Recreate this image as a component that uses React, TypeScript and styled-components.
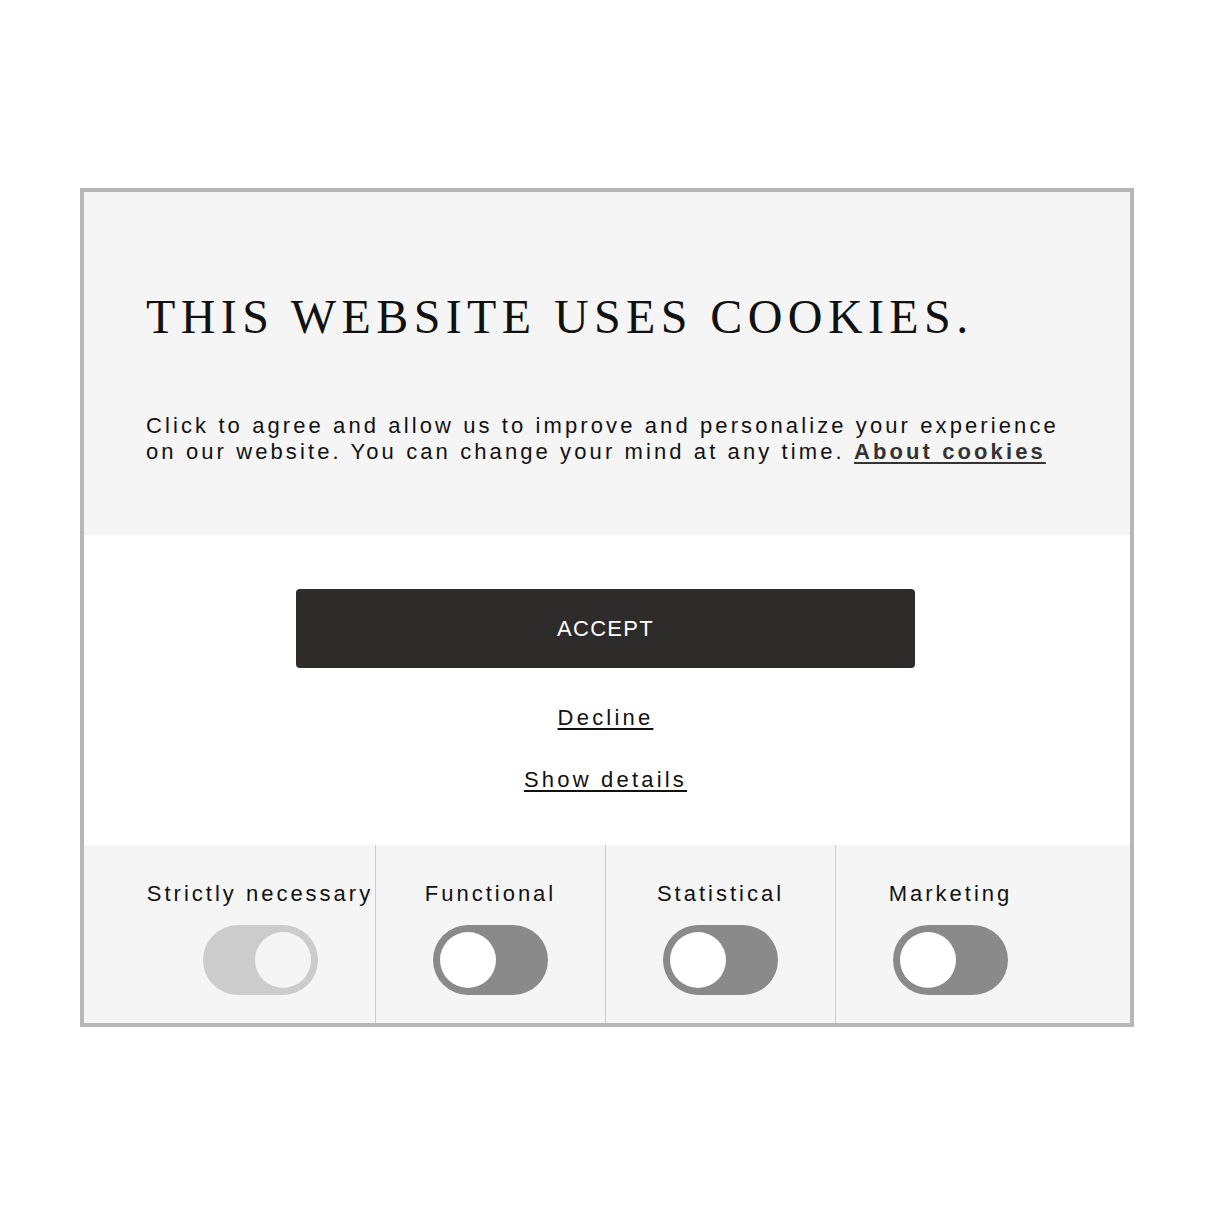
import React from 'react';
import styled, { createGlobalStyle } from 'styled-components';

const GlobalStyle = createGlobalStyle`
  html, body {
    margin: 0;
    padding: 0;
    background: #ffffff;
  }
  body {
    font-family: 'Liberation Sans', Arial, sans-serif;
  }
`;

const categories = [
  { label: 'Strictly necessary', locked: true },
  { label: 'Functional', locked: false },
  { label: 'Statistical', locked: false },
  { label: 'Marketing', locked: false },
];

const App = () => {
  return (
    <>
      <GlobalStyle />
      <Page>
        <Banner>
          <Intro>
            <Title>This website uses cookies.</Title>
            <Text>
              Click to agree and allow us to improve and personalize your experience
              <br />
              on our website. You can change your mind at any time.{' '}
              <AboutLink href='#'>About cookies</AboutLink>
            </Text>
          </Intro>
          <Actions>
            <AcceptButton>ACCEPT</AcceptButton>
            <TextLink href='#'>Decline</TextLink>
            <TextLink href='#'>Show details</TextLink>
          </Actions>
          <Categories>
            {categories.map((c) => (
              <Category key={c.label}>
                <CategoryLabel>{c.label}</CategoryLabel>
                <Toggle $locked={c.locked}>
                  <Knob $locked={c.locked} />
                </Toggle>
              </Category>
            ))}
          </Categories>
        </Banner>
      </Page>
    </>
  );
};

const Page = styled.div`
  width: 1216px;
  height: 1216px;
  padding-top: 188px;
  padding-left: 80px;
  box-sizing: border-box;
`;

const Banner = styled.div`
  width: 1054px;
  box-sizing: border-box;
  border: 4px solid #b7b7b7;
  background: #ffffff;
`;

const Intro = styled.div`
  background: #f5f5f5;
  padding: 101px 62px 70px;
`;

const Title = styled.h1`
  margin: 0 0 72px;
  font-family: 'Liberation Serif', 'Times New Roman', serif;
  font-weight: normal;
  font-size: 48px;
  line-height: 48px;
  letter-spacing: 5.4px;
  text-transform: uppercase;
  color: #111111;
`;

const Text = styled.p`
  margin: 0;
  font-size: 22px;
  line-height: 26px;
  letter-spacing: 3.1px;
  color: #111111;
  white-space: nowrap;
`;

const AboutLink = styled.a`
  font-weight: bold;
  color: #333333;
  text-decoration: underline;
  text-underline-offset: 3px;
`;

const Actions = styled.div`
  display: flex;
  flex-direction: column;
  align-items: center;
  gap: 36px;
  padding: 54px 3px 52px 0;
`;

const AcceptButton = styled.button`
  width: 619px;
  height: 79px;
  margin-bottom: 1px;
  border: none;
  border-radius: 4px;
  background: #2d2c2b;
  color: #ffffff;
  font-family: 'Liberation Sans', Arial, sans-serif;
  font-size: 22px;
  letter-spacing: 1.3px;
  cursor: pointer;
`;

const TextLink = styled.a`
  font-size: 22px;
  line-height: 26px;
  letter-spacing: 3.2px;
  color: #111111;
  text-decoration: underline;
  text-underline-offset: 3px;
`;

const Categories = styled.div`
  display: grid;
  grid-template-columns: repeat(4, 230px);
  padding: 0 61px;
  background: #f5f5f5;
`;

const Category = styled.div`
  display: flex;
  flex-direction: column;
  align-items: center;
  gap: 18px;
  padding: 36px 0 28px;

  & + & {
    border-left: 1px solid #cccccc;
  }
`;

const CategoryLabel = styled.span`
  font-size: 22px;
  line-height: 26px;
  letter-spacing: 3px;
  color: #111111;
  white-space: nowrap;
`;

const Toggle = styled.span<{ $locked: boolean }>`
  display: flex;
  align-items: center;
  justify-content: ${(p) => (p.$locked ? 'flex-end' : 'flex-start')};
  width: 115px;
  height: 70px;
  padding: 0 7px;
  box-sizing: border-box;
  border-radius: 35px;
  background: ${(p) => (p.$locked ? '#cccccc' : '#8a8a8a')};
`;

const Knob = styled.span<{ $locked: boolean }>`
  width: 56px;
  height: 56px;
  border-radius: 50%;
  background: ${(p) => (p.$locked ? '#f5f5f5' : '#ffffff')};
`;

export default App;
